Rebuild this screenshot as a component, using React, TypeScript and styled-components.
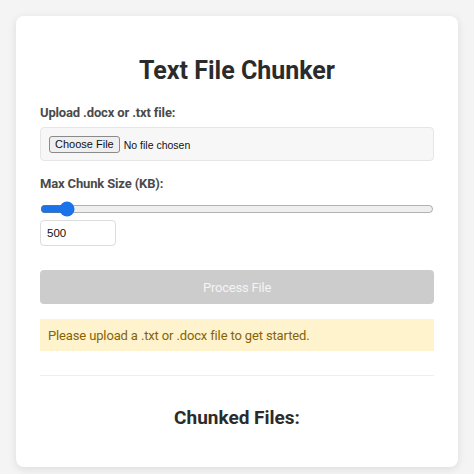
import React, { useState } from "react";
import styled, { createGlobalStyle } from "styled-components";

const Global = createGlobalStyle`
  html, body { margin: 0; padding: 0; background: #f4f4f4; }
  body { font-family: Roboto, "Liberation Sans", Arial, sans-serif; }
  * { box-sizing: border-box; }
`;

const Page = styled.div`
  padding: 16px 16px 8px 16px;
  width: 474px;
`;

const Card = styled.div`
  background: #fff;
  border-radius: 8px;
  box-shadow: 0 2px 8px rgba(0, 0, 0, 0.1);
  padding: 24px 24px 37px;
  display: flex;
  flex-direction: column;
`;

const Title = styled.h1`
  margin: 16px 0 19px;
  font-size: 25px;
  font-weight: 700;
  color: #2b2b2b;
  text-align: center;
  line-height: 30px;
`;

const Label = styled.label<{ $mt?: number }>`
  display: block;
  margin: ${(p) => p.$mt ?? 0}px 0 6px;
  font-size: 13px;
  font-weight: 700;
  letter-spacing: -0.15px;
  color: #4a4a4a;
  line-height: 16px;
`;

const FileBox = styled.div`
  height: 34px;
  display: flex;
  align-items: center;
  padding: 0 8px;
  background: #f7f7f7;
  border: 1px solid #e6e6e6;
  border-radius: 4px;
`;

const FileInput = styled.input`
  font-family: "Liberation Sans", Arial, sans-serif;
  font-size: 10.5px;
  color: #111;
  &::file-selector-button {
    font-family: "Liberation Sans", Arial, sans-serif;
    font-size: 11px;
    height: 17px;
    padding: 0 5px;
    margin-right: 4px;
    border: 1px solid #8a8a8a;
    border-radius: 3px;
    background: #efefef;
    color: #111;
  }
`;

const Range = styled.input`
  display: block;
  width: 100%;
  margin: 3px 0 3px;
  accent-color: #1a73e8;
`;

const NumberInput = styled.input`
  width: 76px;
  height: 26px;
  padding: 0 6px;
  border: 1px solid #dcdcdc;
  border-radius: 4px;
  font-family: "Liberation Sans", Arial, sans-serif;
  font-size: 11.5px;
  color: #111;
  outline: none;
`;

const ProcessButton = styled.button`
  margin-top: 24px;
  height: 34px;
  width: 100%;
  border: none;
  border-radius: 4px;
  background: #cccccc;
  color: #f4f4f4;
  font-family: Roboto, sans-serif;
  font-size: 13px;
  letter-spacing: -0.2px;
`;

const Alert = styled.div`
  margin-top: 15px;
  height: 32px;
  display: flex;
  align-items: center;
  padding: 0 8px;
  background: #fff3cd;
  color: #856404;
  font-size: 13px;
  letter-spacing: -0.14px;
`;

const Divider = styled.hr`
  margin: 24px 0 0;
  border: none;
  border-top: 1px solid #eeeeee;
`;

const SubTitle = styled.h2`
  margin: 30px 0 0;
  font-size: 19px;
  font-weight: 700;
  color: #2b2b2b;
  text-align: center;
  line-height: 24px;
`;

export default function App() {
  const [size, setSize] = useState(500);
  return (
    <>
      <Global />
      <Page>
        <Card>
          <Title>Text File Chunker</Title>
          <Label>Upload .docx or .txt file:</Label>
          <FileBox>
            <FileInput type="file" accept=".docx,.txt" />
          </FileBox>
          <Label $mt={15}>Max Chunk Size (KB):</Label>
          <Range
            type="range"
            min={0}
            max={10000}
            value={size}
            onChange={(e) => setSize(Number(e.target.value))}
          />
          <NumberInput
            type="number"
            value={size}
            onChange={(e) => setSize(Number(e.target.value))}
          />
          <ProcessButton disabled>Process File</ProcessButton>
          <Alert>Please upload a .txt or .docx file to get started.</Alert>
          <Divider />
          <SubTitle>Chunked Files:</SubTitle>
        </Card>
      </Page>
    </>
  );
}
